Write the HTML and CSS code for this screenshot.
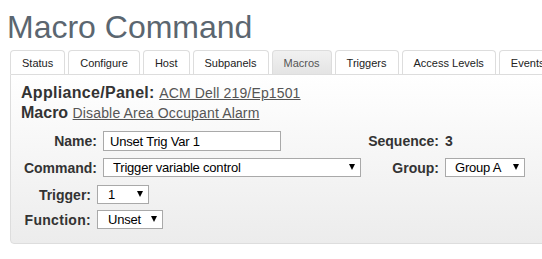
FILE: index.html
```
<!DOCTYPE html>
<html>
<head>
<meta charset="utf-8">
<link rel="stylesheet" href="styles.css">
</head>
<body>
<div class="page">
  <h1 class="title">Macro Command</h1>
  <ul class="tabs">
    <li class="tab">Status</li>
    <li class="tab">Configure</li>
    <li class="tab">Host</li>
    <li class="tab">Subpanels</li>
    <li class="tab active">Macros</li>
    <li class="tab">Triggers</li>
    <li class="tab">Access Levels</li>
    <li class="tab">Events</li>
  </ul>
  <div class="panel">
    <div class="info"><b class="wide">Appliance/Panel:</b> <a class="link" href="#">ACM Dell 219/Ep1501</a></div>
    <div class="info"><b>Macro</b> <a class="link" href="#">Disable Area Occupant Alarm</a></div>
    <div class="form">
      <label class="lbl">Name:</label>
      <div class="field"><input class="text" type="text" value="Unset Trig Var 1"></div>
      <span class="lbl">Sequence:</span>
      <span class="val">3</span>

      <label class="lbl">Command:</label>
      <div class="field"><span class="sel sel-command"><select><option>Trigger variable control</option></select></span></div>
      <label class="lbl">Group:</label>
      <div class="field"><span class="sel sel-group"><select><option>Group A</option></select></span></div>

      <div class="sub">
        <label class="lbl">Trigger:</label>
        <div class="field"><span class="sel sel-trigger"><select><option>1</option></select></span></div>
        <label class="lbl wide-lbl">Function:</label>
        <div class="field"><span class="sel sel-function"><select><option>Unset</option></select></span></div>
      </div>
    </div>
  </div>
</div>
</body>
</html>
```
FILE: styles.css
```
html, body {
  margin: 0;
  padding: 0;
  overflow: hidden;
  background: #fff;
}
body {
  font-family: "Liberation Sans", Arial, sans-serif;
  color: #333;
}
.page {
  width: 620px;
  padding-left: 10px;
}
.title {
  margin: 0 0 5px -3px;
  padding-top: 10px;
  font-size: 32px;
  line-height: 35px;
  font-weight: normal;
  color: #5b6670;
}
.tabs {
  display: flex;
  flex-wrap: nowrap;
  list-style: none;
  margin: 0;
  padding: 0;
  height: 24px;
}
.tab {
  flex: none;
  margin-right: 3px;
  padding: 0 11px;
  height: 24px;
  line-height: 24px;
  box-sizing: border-box;
  border: 1px solid #ddd;
  border-bottom: none;
  border-radius: 4px 4px 0 0;
  background: #fff;
  font-size: 11px;
  color: #222;
  white-space: nowrap;
}
.tab.active {
  background: linear-gradient(#f1f1f1, #e4e4e4);
  color: #555;
}
.panel {
  border: 1px solid #ddd;
  border-radius: 0 0 0 4px;
  background: linear-gradient(#fff, #ececec);
  padding: 8px 10px 14px 10px;
}
.info {
  font-size: 16px;
  line-height: 20px;
  color: #333;
}
.wide {
  letter-spacing: 0.3px;
}
.link {
  font-size: 14px;
  letter-spacing: 0.15px;
  color: #555;
  text-decoration: underline;
}
.form {
  display: grid;
  grid-template-columns: 76px 259px 71px 80px;
  column-gap: 6px;
  row-gap: 7px;
  align-items: center;
  margin-top: 8px;
}
.lbl {
  font-size: 14px;
  font-weight: bold;
  color: #333;
  text-align: right;
  white-space: nowrap;
}
.wide-lbl {
  letter-spacing: 0.3px;
}
.val {
  font-size: 14px;
  font-weight: bold;
  color: #333;
}
.field {
  display: flex;
}
.text {
  box-sizing: border-box;
  width: 178px;
  height: 20px;
  margin: 0;
  padding: 0 6px;
  border: 1px solid #a9a9a9;
  border-radius: 0;
  background: #fff;
  font-family: "Liberation Sans", Arial, sans-serif;
  font-size: 13px;
  letter-spacing: -0.2px;
  color: #000;
}
.sel {
  position: relative;
  display: inline-block;
}
.sel select {
  -webkit-appearance: none;
  appearance: none;
  box-sizing: border-box;
  width: 100%;
  height: 19px;
  margin: 0;
  padding: 0 18px 0 9px;
  border: 1px solid #a9a9a9;
  border-radius: 0;
  background: #fff;
  font-family: "Liberation Sans", Arial, sans-serif;
  font-size: 13px;
  letter-spacing: -0.2px;
  line-height: 17px;
  color: #000;
}
.sel::after {
  content: "";
  position: absolute;
  right: 6px;
  top: 6px;
  border-left: 3px solid transparent;
  border-right: 3px solid transparent;
  border-top: 6px solid #000;
  pointer-events: none;
}
.sel-command { width: 258px; }
.sel-group { width: 80px; }
.sel-trigger { width: 52px; }
.sel-function { width: 66px; }
.sel-trigger select,
.sel-function select { padding-left: 10px; }
.sub {
  grid-column: 1 / -1;
  display: grid;
  grid-template-columns: 70px auto;
  column-gap: 6px;
  row-gap: 6px;
  align-items: center;
  justify-content: start;
  margin-top: 1px;
}
```
